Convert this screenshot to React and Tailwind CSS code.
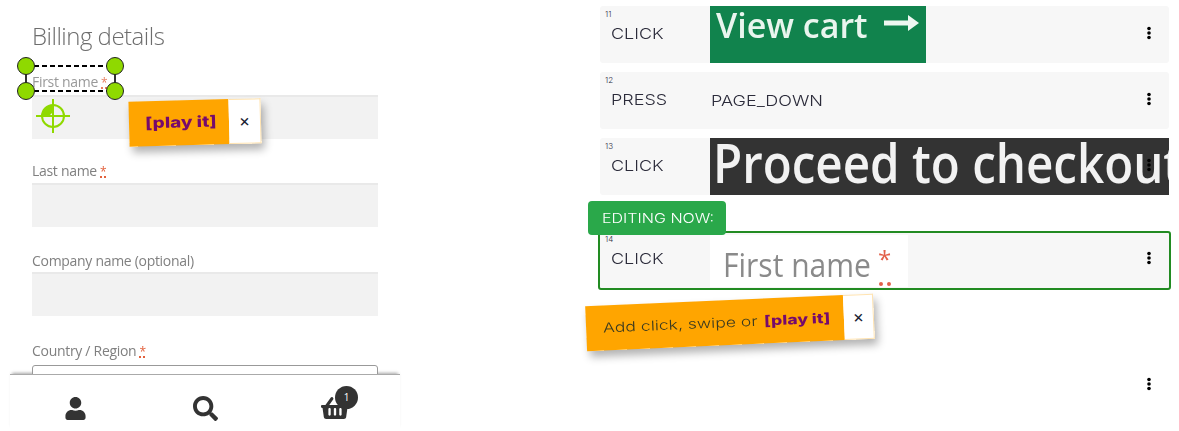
import { FaUser, FaSearch, FaShoppingBasket } from "react-icons/fa";

const wide = "font-['Inter',sans-serif] font-light text-[#2b2b3a]";
const stretch = "inline-block origin-left scale-x-[1.2]";
const labelClass = "block font-['Open_Sans',sans-serif] text-[14px] leading-[20px] tracking-[-0.3px] text-[#808080] blur-[0.3px]";
const fieldClass = "h-[44px] border-t-2 border-[#e9e9e9] bg-[#f2f2f2]";

function Required() {
  return (
    <span className="relative ml-[3px] text-[12px] text-[#e2603c]">
      *
      <span className="absolute left-0 top-[13px] h-[2px] w-[6px] border-t-2 border-dotted border-[#e2603c]" />
    </span>
  );
}

function Dots() {
  return (
    <svg width="4" height="14" viewBox="0 0 4 14" className="fill-black">
      <circle cx="2" cy="2.5" r="1.8" />
      <circle cx="2" cy="7" r="1.8" />
      <circle cx="2" cy="11.5" r="1.8" />
    </svg>
  );
}

function Crosshair() {
  return (
    <svg width="36" height="36" viewBox="0 0 36 36" fill="none" stroke="#8fd900" strokeWidth="2">
      <circle cx="18" cy="18" r="11" />
      <path d="M18 1v34M1 18h34" />
      <path d="M18 7a11 11 0 0 0-11 11h7l4-4z" fill="#8fd900" stroke="none" />
    </svg>
  );
}

function SelectionBox() {
  const handles = [[9, 9], [98, 9], [9, 34], [98, 34]];
  return (
    <svg width="107" height="43" viewBox="0 0 107 43" fill="none">
      <path d="M9 9H98M9 34H98" stroke="#000" strokeWidth="2" strokeDasharray="5 3" />
      <path d="M9 9V34M98 9V34" stroke="#333" strokeWidth="2" />
      {handles.map(([x, y]) => (
        <circle key={`${x}-${y}`} cx={x} cy={y} r="8.5" fill="#8fd900" stroke="#222" />
      ))}
    </svg>
  );
}

function ArrowRight() {
  return (
    <svg width="36" height="18" viewBox="0 0 36 18" className="fill-[#eef7f1]">
      <path d="M0 6.5h24V1l11 8-11 8v-5.5H0z" />
    </svg>
  );
}

function CloseBox({ className }) {
  return (
    <span className={`flex items-center justify-center border-y border-r border-[#ffe3b0] bg-white font-['Inter',sans-serif] text-[17px] text-[#1a2233] ${className}`}>
      ×
    </span>
  );
}

function Row({ num, action, children, className = "h-[57px] bg-[#f7f7f7]", framed = false }) {
  return (
    <div className={`relative flex rounded-[3px] ${className}`}>
      <div className={`w-[110px] shrink-0 pl-[5px] ${framed ? "pt-[1px]" : "pt-[3px]"}`}>
        <div className={`${wide} h-[15px] text-[8px] leading-[10px]`}>{num}</div>
        <div className={`${wide} pl-[6px] text-[15px] leading-[20px]`}>
          <span className={stretch}>{action}</span>
        </div>
      </div>
      <div className="min-w-0 flex-1 overflow-hidden">{children}</div>
      <div className={`absolute right-[18px] ${framed ? "top-[18px]" : "top-[20px]"}`}>
        <Dots />
      </div>
    </div>
  );
}

export default function App() {
  return (
    <div className="flex h-[431px] w-[1179px] overflow-hidden bg-white">
      <div className="flex w-[400px] shrink-0 flex-col">
        <div className="relative h-[374px] overflow-hidden pl-[32px] pr-[22px] pt-[20px]">
          <h2 className="font-['Open_Sans',sans-serif] text-[24px] font-light leading-[32px] tracking-[-0.5px] text-[#6d6d6d] blur-[0.3px]">
            Billing details
          </h2>
          <label className={`${labelClass} mt-[20px] opacity-80`}>
            First name<Required />
          </label>
          <div className={`${fieldClass} mt-[2px]`} />
          <label className={`${labelClass} mt-[22px]`}>
            Last name<Required />
          </label>
          <div className={`${fieldClass} mt-[1px]`} />
          <label className={`${labelClass} mt-[24px]`}>Company name (optional)</label>
          <div className={`${fieldClass} mt-[1px]`} />
          <label className={`${labelClass} mt-[25px]`}>
            Country / Region<Required />
          </label>
          <div className="mt-[3px] h-[30px] rounded-[3px] border border-[#999] bg-white" />

          <div className="absolute left-[17px] top-[57px]">
            <SelectionBox />
          </div>
          <div className="absolute left-[35px] top-[98px]">
            <Crosshair />
          </div>

          <div className="absolute left-[129px] top-[100px] flex h-[45px] -rotate-[1.5deg] shadow-[3px_6px_8px_rgba(0,0,0,0.3)]">
            <span className="flex w-[100px] items-center bg-[#ffa500] pl-[16px] font-['Inter',sans-serif] text-[15px] font-extrabold text-[#760a6c]">
              <span className="inline-block origin-left scale-x-[1.26]">[play it]</span>
            </span>
            <CloseBox className="w-[32px]" />
          </div>
        </div>
        <div className="ml-[10px] flex h-[57px] items-center border-t border-[#aaa] bg-white pt-[10px] shadow-[0_-3px_3px_-2px_rgba(0,0,0,0.35)]">
          <div className="flex w-[130px] justify-center">
            <FaUser className="text-[23px] text-[#333]" />
          </div>
          <div className="flex w-[130px] justify-center">
            <FaSearch className="text-[25px] text-[#333]" />
          </div>
          <div className="flex w-[130px] justify-center">
            <div className="relative">
              <FaShoppingBasket className="text-[28px] text-[#333]" />
              <span className="absolute left-[14px] top-[-8px] flex h-[23px] w-[23px] items-center justify-center rounded-full bg-[#333] font-['Open_Sans',sans-serif] text-[10px] text-white">
                1
              </span>
            </div>
          </div>
        </div>
      </div>

      <div className="ml-[200px] w-[569px] shrink-0 pt-[6px]">
        <div className="flex flex-col gap-[9px]">
          <Row num="11" action="CLICK">
            <div className="flex h-full w-[216px] bg-[#11834d] pl-[6px]">
              <span className="w-[168px] whitespace-nowrap font-['Open_Sans',sans-serif] text-[34px] font-semibold leading-[38px] text-[#e9f5ee] blur-[0.5px]">
                View cart
              </span>
              <span className="mt-[8px]">
                <ArrowRight />
              </span>
            </div>
          </Row>
          <Row num="12" action="PRESS">
            <div className={`${wide} pl-[1px] pt-[19px] text-[15px] leading-[20px]`}>
              <span className={stretch}>PAGE_DOWN</span>
            </div>
          </Row>
          <Row num="13" action="CLICK">
            <div className="h-full bg-[#333] pl-[3px]">
              <span className="inline-block origin-left scale-x-[0.88] whitespace-nowrap font-['Open_Sans',sans-serif] text-[54px] font-semibold leading-[48px] text-[#f2f2f2] blur-[0.6px]">
                Proceed to checkout
              </span>
            </div>
          </Row>
        </div>

        <div className="relative mt-[36px]">
          <span className={`absolute left-[-12px] top-[-30px] z-10 w-[138px] rounded-[4px] bg-[#2aa84a] py-[8px] pl-[14px] font-['Inter',sans-serif] text-[13.5px] font-light leading-[18px] text-white`}>
            <span className="inline-block origin-left scale-x-[1.19] whitespace-nowrap">EDITING NOW:</span>
          </span>
          <Row num="14" action="CLICK" framed className="ml-[-2px] mr-[-2px] h-[59px] border-2 border-[#228b22] bg-[#f7f7f7]">
            <div className="mt-[2px] flex h-[52px] w-[198px] bg-white pl-[13px] pt-[9px] font-['Open_Sans',sans-serif] text-[33px] leading-[42px] text-[#8a8a8a]">
              <span className="w-[155px] origin-left scale-x-[0.91] whitespace-nowrap font-medium blur-[0.5px]">First name</span>
              <span className="relative text-[24px] leading-[30px] text-[#e2604a] blur-[0.4px]">
                *
                <span className="absolute left-[1px] top-[38px] h-[4px] w-[12px] border-t-4 border-dotted border-[#e2604a]" />
              </span>
            </div>
          </Row>
          <div className="absolute left-[-14px] top-[69px] flex h-[45px] -rotate-[2.5deg] shadow-[3px_6px_8px_rgba(0,0,0,0.3)]">
            <span className="flex w-[258px] items-center whitespace-nowrap bg-[#ffa500] pl-[17px] font-['Inter',sans-serif] text-[13.5px] font-light text-[#3a3a20]">
              <span className="inline-block w-[161px] origin-left scale-x-[1.3]">Add click, swipe or</span>
              <span className="inline-block origin-left scale-x-[1.3] font-extrabold text-[#760a6c]">[play it]</span>
            </span>
            <CloseBox className="w-[30px]" />
          </div>
        </div>

        <Row num="" action="" className="mt-[67px] h-[57px]" />
      </div>
    </div>
  );
}
